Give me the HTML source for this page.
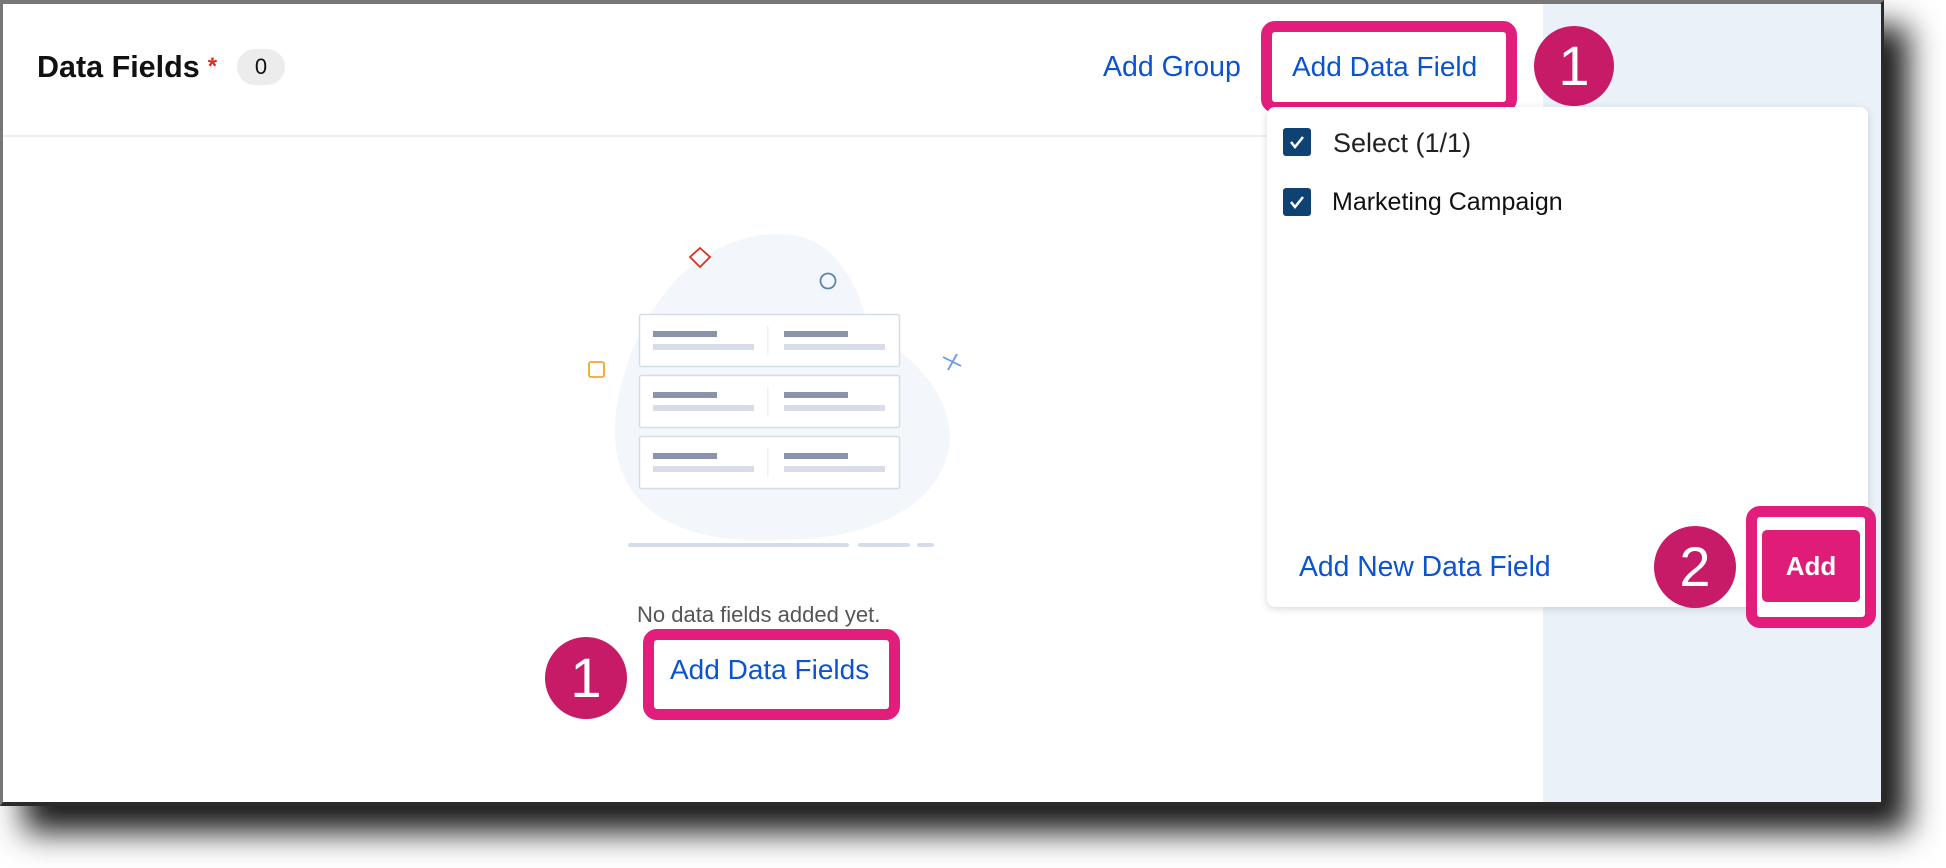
<!DOCTYPE html>
<html><head><meta charset="utf-8"><style>
html,body{margin:0;padding:0;}
body{width:1946px;height:868px;position:relative;overflow:hidden;background:#fff;font-family:"Liberation Sans",sans-serif;}
.frame{position:absolute;left:0;top:0;width:1877px;height:798px;border-top:4px solid #777;border-left:3px solid #777;border-right:4px solid #2a2a2a;border-bottom:4px solid #2a2a2a;background:#fff;box-shadow:24px 26px 30px rgba(0,0,0,.9);}
.abs{position:absolute;}
.blue{color:#0a54cf;}
.side{left:1543px;top:4px;width:338px;height:798px;background:#eaf1f9;}
.pinkbox{border:11px solid #e31d7b;border-radius:14px;background:#fff;box-sizing:border-box;}
.circ{border-radius:50%;background:#c71a67;color:#fff;text-align:center;font-size:56px;}
.cb{width:28px;height:28px;background:#0e4273;border-radius:3px;}
</style></head><body>
<div class="frame"></div>
<div class="abs side"></div>
<div class="abs" style="left:3px;top:135px;width:1540px;height:2px;background:#eceef0"></div>
<div class="abs" style="left:37px;top:49px;font-size:30.5px;font-weight:bold;color:#111;line-height:36px">Data Fields<span style="color:#e12b1f;font-size:24px;vertical-align:top;margin-left:8px">*</span></div>
<div class="abs" style="left:237px;top:49px;width:48px;height:36px;border-radius:18px;background:#ececec;font-size:22px;text-align:center;line-height:36px;color:#111">0</div>
<div class="abs blue" style="left:1103px;top:50px;font-size:28.5px;line-height:34px">Add Group</div>
<div class="abs pinkbox" style="left:1261px;top:21px;width:256px;height:92px"></div>
<div class="abs blue" style="left:1292px;top:50px;font-size:28px;line-height:34px">Add Data Field</div>
<div class="abs circ" style="left:1534px;top:26px;width:80px;height:80px;line-height:80px">1</div>
<div class="abs" style="left:1267px;top:107px;width:601px;height:500px;background:#fff;border-radius:8px;box-shadow:0 2px 8px rgba(0,0,0,.15)"></div>
<div class="abs cb" style="left:1283px;top:128px"><svg width="28" height="28"><path d="M8 14 l4 5 l8 -10" stroke="#fff" stroke-width="2.5" fill="none"/></svg></div>
<div class="abs" style="left:1333px;top:126px;font-size:27px;color:#222;line-height:34px">Select (1/1)</div>
<div class="abs cb" style="left:1283px;top:188px"><svg width="28" height="28"><path d="M8 14 l4 5 l8 -10" stroke="#fff" stroke-width="2.5" fill="none"/></svg></div>
<div class="abs" style="left:1332px;top:187px;font-size:25px;color:#111;line-height:30px">Marketing Campaign</div>
<div class="abs blue" style="left:1299px;top:549px;font-size:28.3px;line-height:34px">Add New Data Field</div>
<div class="abs circ" style="left:1654px;top:526px;width:82px;height:82px;line-height:82px">2</div>
<div class="abs pinkbox" style="left:1746px;top:506px;width:130px;height:122px"></div>
<div class="abs" style="left:1762px;top:530px;width:98px;height:72px;background:#e01c79;border-radius:5px;color:#fff;font-size:26px;font-weight:bold;text-align:center;line-height:72px">Add</div>
<svg class="abs" style="left:0;top:0" width="1946" height="868">
<path d="M775 234 C830 232 855 275 870 330 C910 355 950 390 950 440 C945 500 880 540 780 540 C680 545 620 510 615 440 C612 390 640 300 700 260 C720 245 750 234 775 234 Z" fill="#f3f7fc"/>
<rect x="628" y="543" width="221" height="4" rx="2" fill="#d4dde8"/>
<rect x="858" y="543" width="52" height="4" rx="2" fill="#d4dde8"/>
<rect x="917" y="543" width="17" height="4" rx="2" fill="#d4dde8"/>
<g>
<rect x="639.5" y="314.5" width="260" height="52" rx="2" fill="#fff" stroke="#d3dde6" stroke-width="1.5"/>
<rect x="653" y="331" width="64" height="6" fill="#8a93ab"/><rect x="653" y="344" width="101" height="6" fill="#d7dce8"/>
<rect x="767" y="326" width="1.5" height="29" fill="#eef1f4"/>
<rect x="784" y="331" width="64" height="6" fill="#8a93ab"/><rect x="784" y="344" width="101" height="6" fill="#d7dce8"/>
</g>
<g transform="translate(0,61)">
<rect x="639.5" y="314.5" width="260" height="52" rx="2" fill="#fff" stroke="#d3dde6" stroke-width="1.5"/>
<rect x="653" y="331" width="64" height="6" fill="#8a93ab"/><rect x="653" y="344" width="101" height="6" fill="#d7dce8"/>
<rect x="767" y="326" width="1.5" height="29" fill="#eef1f4"/>
<rect x="784" y="331" width="64" height="6" fill="#8a93ab"/><rect x="784" y="344" width="101" height="6" fill="#d7dce8"/>
</g>
<g transform="translate(0,122)">
<rect x="639.5" y="314.5" width="260" height="52" rx="2" fill="#fff" stroke="#d3dde6" stroke-width="1.5"/>
<rect x="653" y="331" width="64" height="6" fill="#8a93ab"/><rect x="653" y="344" width="101" height="6" fill="#d7dce8"/>
<rect x="767" y="326" width="1.5" height="29" fill="#eef1f4"/>
<rect x="784" y="331" width="64" height="6" fill="#8a93ab"/><rect x="784" y="344" width="101" height="6" fill="#d7dce8"/>
</g>
<path d="M700 248 L710 257 L700 267 L690 257 Z" fill="none" stroke="#e0301e" stroke-width="1.8"/>
<circle cx="828" cy="281" r="7.5" fill="none" stroke="#5d86ab" stroke-width="1.8"/>
<rect x="589" y="362" width="15" height="15" rx="2" fill="none" stroke="#f5a623" stroke-width="1.8"/>
<path d="M943 357 L961 366 M957 354 L948 370" stroke="#6b9ae0" stroke-width="1.8"/>
</svg>
<div class="abs" style="left:637px;top:602px;font-size:22px;color:#555;line-height:26px">No data fields added yet.</div>
<div class="abs pinkbox" style="left:643px;top:629px;width:257px;height:91px"></div>
<div class="abs blue" style="left:670px;top:653px;font-size:28px;line-height:34px">Add Data Fields</div>
<div class="abs circ" style="left:545px;top:637px;width:82px;height:82px;line-height:82px">1</div>
</body></html>
